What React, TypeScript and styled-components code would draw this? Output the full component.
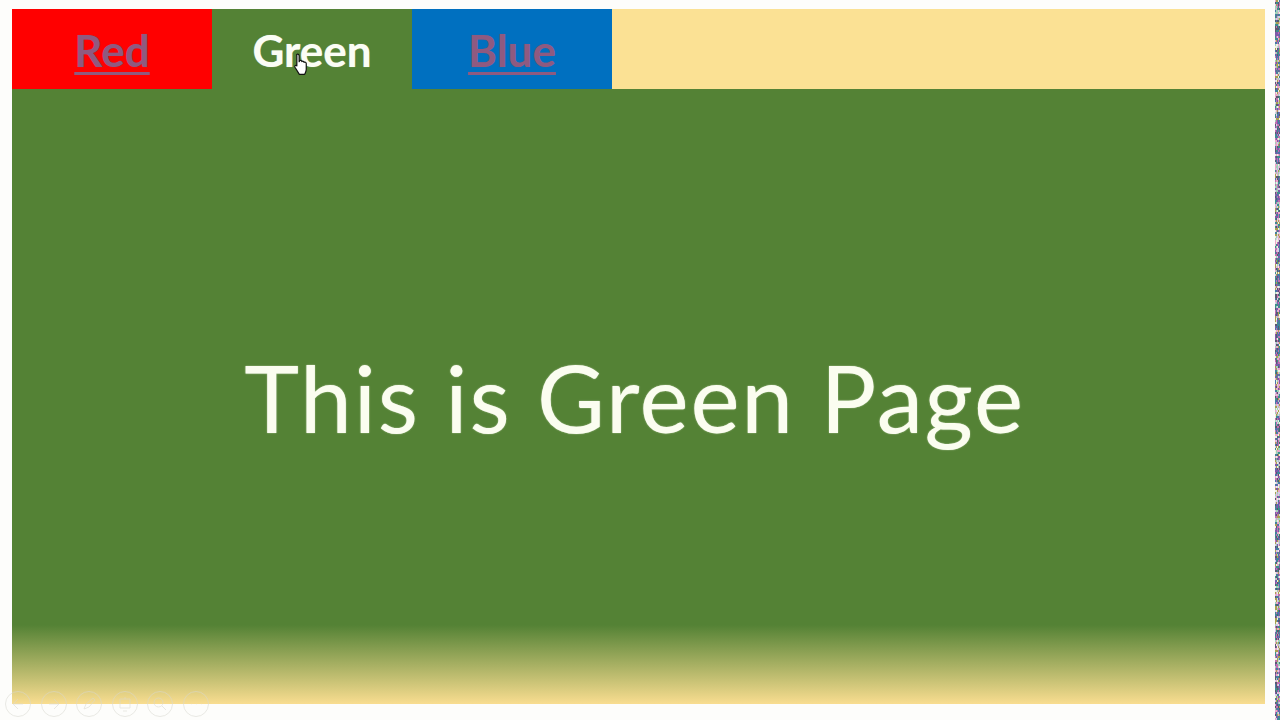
import React from 'react';
import styled, { createGlobalStyle } from 'styled-components';

const Global = createGlobalStyle`
  html, body { margin: 0; padding: 0; width: 1280px; height: 720px; overflow: hidden; background: #fdfdfb; }
  #root { width: 1280px; height: 720px; }
`;

const Page = styled.div`
  position: relative;
  width: 1280px;
  height: 720px;
  display: flex;
  padding: 9px 0 16px 12px;
  box-sizing: border-box;
  font-family: Lato, Carlito, "Open Sans", sans-serif;
`;

const Slide = styled.main`
  width: 1253px;
  display: flex;
  flex-direction: column;
`;

const TabBar = styled.nav`
  height: 80px;
  display: flex;
  background: #fbe194;
`;

const Tab = styled.a<{ $bg: string; $active?: boolean }>`
  width: 200px;
  display: flex;
  align-items: center;
  justify-content: center;
  box-sizing: border-box;
  padding-top: 2px;
  background: ${p => p.$bg};
  color: ${p => (p.$active ? '#fbfdf5' : '#8f5a80')};
  font-size: 44px;
  font-weight: 700;
  text-decoration: ${p => (p.$active ? 'none' : 'underline')};
  text-decoration-thickness: 3px;
  text-underline-offset: 5px;
  text-shadow: 0 0 1px ${p => (p.$active ? 'rgba(251, 253, 245, 0.5)' : 'rgba(143, 90, 128, 0.4)')};
`;

const Panel = styled.section`
  flex: 1;
  display: flex;
  align-items: center;
  justify-content: center;
  padding: 1px 8px 0 0;
  background: linear-gradient(to bottom, #548235 0, #548235 536px, #f9dd90 100%);
`;

const Title = styled.h1`
  margin: 0;
  color: #fbfdf0;
  font-size: 93px;
  font-weight: 400;
  letter-spacing: 1.75px;
  white-space: nowrap;
  text-shadow: 0 0 1.5px rgba(251, 253, 240, 0.7);
`;

const Strip = styled.svg`
  width: 5px;
  height: 720px;
  margin: -9px 0 -16px 10px;
  flex: none;
`;

const Pointer = styled.svg`
  position: absolute;
  left: 293px;
  top: 53px;
  width: 16px;
  height: 23px;
`;

const Controls = styled.div`
  position: absolute;
  left: 5px;
  top: 691px;
  display: flex;
  gap: 9.6px;
  opacity: 0.55;
`;

const ControlIcon = styled.svg`
  width: 26px;
  height: 26px;
  fill: none;
  stroke: #d8d8d0;
  stroke-width: 1;
`;

const colors = ['#7f5aa8', '#d8c8e8', '#3c8f8c', '#e8a8c8', '#5a5a70', '#9fd0b8', '#c070b0', '#f0f0e0', '#4878a8', '#a8a050'];

function noise() {
  const cells: React.ReactElement[] = [];
  let seed = 17;
  for (let y = 0; y < 720; y += 2) {
    for (let x = 0; x < 5; x += 1) {
      seed = (seed * 1103515245 + 12345) & 0x7fffffff;
      cells.push(<rect key={`${x}-${y}`} x={x} y={y} width="1" height="2" fill={colors[(seed >> 8) % colors.length]} />);
    }
  }
  return cells;
}

const controlPaths = [
  <path key="a" d="M13 8l-5 5 5 5M8 13h10" />,
  <path key="b" d="M13 8l5 5-5 5M18 13H8" />,
  <path key="c" d="M8 18l2-5 7-6 2 2-6 7z" />,
  <path key="d" d="M8 8h10v9H8zM13 8V6M11 20h4" />,
  <path key="e" d="M15 15l4 4M16 11.500a4.500 4.500 0 1 1-9 0a4.500 4.500 0 1 1 9 0" />,
  <path key="f" d="M8 13h.5M13 13h.5M18 13h.5" />,
];

export default function App() {
  return (
    <Page>
      <Global />
      <Slide>
        <TabBar>
          <Tab $bg="#ff0000">Red</Tab>
          <Tab $bg="#548235" $active>Green</Tab>
          <Tab $bg="#0070c0">Blue</Tab>
        </TabBar>
        <Panel>
          <Title>This is Green Page</Title>
        </Panel>
      </Slide>
      <Strip viewBox="0 0 5 720" aria-hidden="true">{noise()}</Strip>
      <Pointer viewBox="0 0 14 21" aria-hidden="true">
        <path
          d="M3 1.500c1-.8 2.200-.3 2.300 1V8l.5-1c1-.5 1.800 0 2 .8.800-.6 1.800-.2 2 .7.900-.4 1.900.1 2 1.200V15c0 2-1 3.200-1.500 4.500H5.500L1.500 13c-.7-1.200.5-2.300 1.700-1.300V2.500z"
          fill="#ffffff"
          stroke="#111111"
          strokeWidth="1.100"
          strokeLinejoin="round"
        />
      </Pointer>
      <Controls aria-hidden="true">
        {controlPaths.map((path, i) => (
          <ControlIcon key={i} viewBox="0 0 26 26">
            <circle cx="13" cy="13" r="12.500" />
            {path}
          </ControlIcon>
        ))}
      </Controls>
    </Page>
  );
}
